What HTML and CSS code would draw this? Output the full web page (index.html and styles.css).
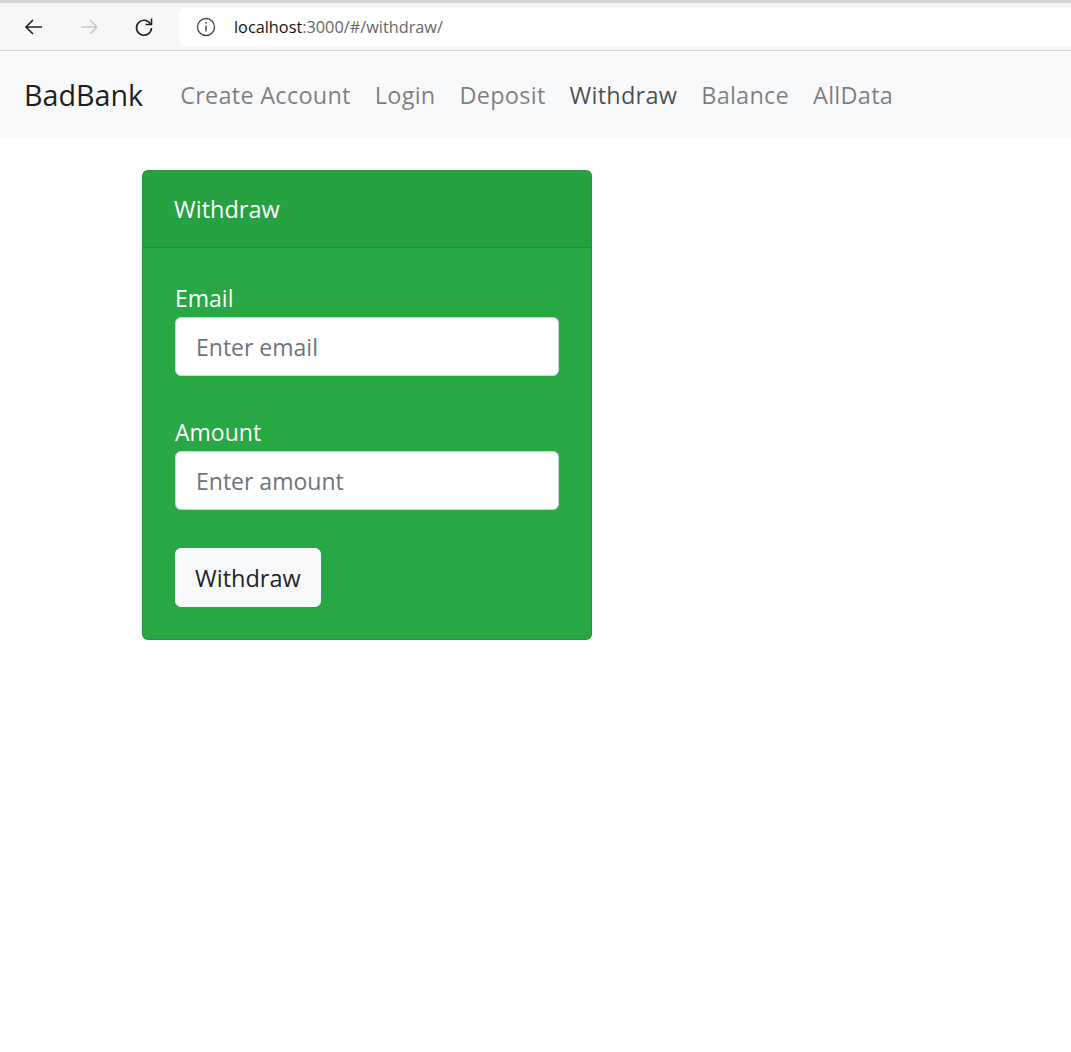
FILE: index.html
```html
<!DOCTYPE html>
<html lang="en">
<head>
    <meta charset="UTF-8">
    <meta name="viewport" content="width=device-width, initial-scale=1.0">
    <title>BadBank - Withdraw</title>
    <link rel="stylesheet" href="styles.css">
</head>
<body>
    <div class="browser-bar">
        <span class="tool-btn">
            <svg width="24" height="24" viewBox="0 0 24 24"><path d="M20 12H4M11 5l-7 7 7 7" fill="none" stroke="#222" stroke-width="1.6"/></svg>
        </span>
        <span class="tool-btn">
            <svg width="24" height="24" viewBox="0 0 24 24"><path d="M4 12h16M13 5l7 7-7 7" fill="none" stroke="#c8c8c8" stroke-width="1.6"/></svg>
        </span>
        <span class="tool-btn">
            <svg width="24" height="24" viewBox="0 0 24 24"><path d="M18.5 9A7.5 7.5 0 1 0 19.5 13" fill="none" stroke="#222" stroke-width="1.6"/><path d="M19.5 3.5V9.5H13.5" fill="none" stroke="#222" stroke-width="1.6"/></svg>
        </span>
        <div class="url-box">
            <svg class="info-icon" width="20" height="20" viewBox="0 0 20 20"><circle cx="10" cy="10" r="8.5" fill="none" stroke="#444" stroke-width="1.3"/><path d="M10 8.5v6" stroke="#444" stroke-width="1.4"/><circle cx="10" cy="5.8" r="0.9" fill="#444"/></svg>
            <span class="url-host">localhost</span><span class="url-rest">:3000/#/withdraw/</span>
        </div>
    </div>

    <nav class="navbar">
        <a class="brand" href="#">BadBank</a>
        <a class="nav-link" href="#/CreateAccount/">Create Account</a>
        <a class="nav-link" href="#/login/">Login</a>
        <a class="nav-link" href="#/deposit/">Deposit</a>
        <a class="nav-link active" href="#/withdraw/">Withdraw</a>
        <a class="nav-link" href="#/balance/">Balance</a>
        <a class="nav-link" href="#/alldata/">AllData</a>
    </nav>

    <main class="page">
        <div class="card">
            <div class="card-header">Withdraw</div>
            <div class="card-body">
                <label class="field-label" for="email">Email</label>
                <input class="form-control" id="email" type="input" placeholder="Enter email">
                <label class="field-label spaced" for="amount">Amount</label>
                <input class="form-control" id="amount" type="input" placeholder="Enter amount">
                <button class="btn-light" type="submit">Withdraw</button>
            </div>
        </div>
    </main>
</body>
</html>
```

FILE: styles.css
```css
body {
    margin: 0;
    font-family: "Open Sans", "Noto Sans", sans-serif;
    background-color: #fff;
    color: #212529;
}

/* fake browser toolbar */
.browser-bar {
    display: flex;
    align-items: center;
    height: 47px;
    border-top: 3px solid #d6d6d6;
    border-bottom: 1px solid #cfcfcf;
    background-color: #f7f7f7;
    padding-left: 22px;
}

.tool-btn {
    display: flex;
    width: 24px;
    height: 24px;
    margin-right: 31px;
}

.tool-btn:nth-child(3) {
    margin-right: 23px;
}

.url-box {
    flex: 1;
    display: flex;
    align-items: center;
    height: 38px;
    background-color: #fff;
    border-radius: 5px 0 0 5px;
    padding-left: 17px;
    font-size: 16.3px;
}

.info-icon {
    margin-right: 18px;
}

.url-host {
    color: #111;
}

.url-rest {
    color: #666;
}

/* navbar */
.navbar {
    display: flex;
    align-items: center;
    height: 87px;
    padding: 0 24px;
    background-color: #f8f9fa;
}

.navbar a {
    text-decoration: none;
}

.brand {
    font-size: 28.7px;
    color: rgba(0, 0, 0, 0.9);
    margin-right: 25px;
}

.nav-link {
    font-size: 23.5px;
    letter-spacing: 0.25px;
    padding: 0 12px;
    color: rgba(0, 0, 0, 0.5);
}

.nav-link.active {
    color: rgba(0, 0, 0, 0.7);
}

/* content */
.page {
    padding: 32px 0 0 142px;
}

.card {
    width: 448px;
    background-color: #28a745;
    border: 1px solid rgba(0, 0, 0, 0.125);
    border-radius: 6px;
    color: #fff;
}

.card-header {
    height: 76px;
    display: flex;
    align-items: center;
    padding: 0 31px;
    font-size: 23.5px;
    background-color: rgba(0, 0, 0, 0.03);
    border-bottom: 1px solid rgba(0, 0, 0, 0.125);
}

.card-body {
    display: flex;
    flex-direction: column;
    align-items: flex-start;
    padding: 30px 32px 32px;
}

.field-label {
    height: 39px;
    display: flex;
    align-items: center;
    font-size: 23px;
}

.field-label.spaced {
    margin-top: 36px;
}

.form-control {
    box-sizing: border-box;
    width: 384px;
    height: 59px;
    margin: 0;
    padding: 0 20px;
    border: 1px solid #ced4da;
    border-radius: 6px;
    font-family: inherit;
    font-size: 23px;
    color: #495057;
    background-color: #fff;
}

.form-control::placeholder {
    color: #6c757d;
}

.btn-light {
    margin-top: 38px;
    height: 59px;
    padding: 0 19px;
    border: 1px solid #f8f9fa;
    border-radius: 6px;
    background-color: #f8f9fa;
    font-family: inherit;
    font-size: 23.5px;
    color: #212529;
    cursor: pointer;
}
```
